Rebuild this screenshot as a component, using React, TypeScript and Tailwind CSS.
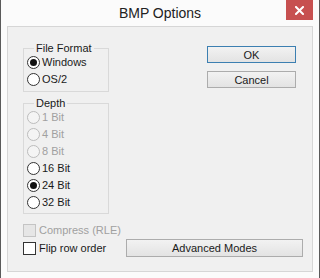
import React from "react";

function Radio({ label, checked = false, disabled = false }: { label: string; checked?: boolean; disabled?: boolean }) {
  return (
    <div className="flex h-[17px] items-center gap-[2px]">
      <span
        className={`flex h-[13px] w-[13px] items-center justify-center rounded-full border ${
          disabled ? "border-[#bcbcbc] bg-[#f4f4f4]" : "border-[#333333] bg-white"
        }`}
      >
        {checked && <span className="h-[7px] w-[7px] rounded-full bg-[#111111]" />}
      </span>
      <span className={disabled ? "text-[#a0a0a0]" : "text-[#1a1a1a]"}>{label}</span>
    </div>
  );
}

function Checkbox({ label, disabled = false }: { label: string; disabled?: boolean }) {
  return (
    <div className="flex h-[17px] items-center gap-[3px]">
      <span
        className={`h-[13px] w-[13px] border ${
          disabled ? "border-[#c4c4c4] bg-[#e6e6e6]" : "border-[#333333] bg-white"
        }`}
      />
      <span className={disabled ? "text-[#a0a0a0]" : "text-[#1a1a1a]"}>{label}</span>
    </div>
  );
}

function Group({ title, children }: { title: string; children: React.ReactNode }) {
  return (
    <div className="flex w-[86px] flex-col border border-[#d9d9d9] pl-[3px]">
      <span className="-mt-[7px] ml-[7px] h-[12px] w-fit bg-[#f0f0f0] px-[2px] leading-[12px] text-[#1a1a1a]">
        {title}
      </span>
      {children}
    </div>
  );
}

export default function App() {
  return (
    <div
      className="flex h-[278px] w-[320px] flex-col border-x border-[#5a5a5a] bg-[#fbfbfb] text-[11px]"
      style={{ fontFamily: '"Liberation Sans", Arial, sans-serif' }}
    >
      {/* title bar */}
      <div className="relative flex h-[26px] items-center justify-center">
        <span className="text-[14px] text-[#222222]">BMP Options</span>
        <div className="absolute right-[6px] top-0 flex h-[20px] w-[27px] items-center justify-center bg-[#c75050]">
          <svg width="9" height="9" viewBox="0 0 9 9">
            <path d="M1 1L8 8M8 1L1 8" stroke="white" strokeWidth="2" strokeLinecap="square" />
          </svg>
        </div>
      </div>

      {/* client area */}
      <div className="mx-[6px] flex h-[246px] flex-col border border-[#d6d6d6] bg-[#f0f0f0]">
        <div className="flex">
          <div className="ml-[15px] flex flex-col">
            <div className="mt-[21px]">
              <Group title="File Format">
                <div className="pb-[3px]">
                  <Radio label="Windows" checked />
                  <Radio label="OS/2" />
                </div>
              </Group>
            </div>
            <div className="mt-[11px]">
              <Group title="Depth">
                <div className="pb-[2px]">
                  <Radio label="1 Bit" disabled />
                  <Radio label="4 Bit" disabled />
                  <Radio label="8 Bit" disabled />
                  <Radio label="16 Bit" />
                  <Radio label="24 Bit" checked />
                  <Radio label="32 Bit" />
                </div>
              </Group>
            </div>
          </div>
          <div className="ml-auto mr-[16px] mt-[19px] flex w-[89px] flex-col gap-[8px]">
            <button className="h-[17px] border border-[#3c7fb1] bg-gradient-to-b from-[#f2f2f2] to-[#e3e3e3] text-[#1a1a1a]">
              OK
            </button>
            <button className="h-[17px] border border-[#acacac] bg-gradient-to-b from-[#f2f2f2] to-[#e3e3e3] text-[#1a1a1a]">
              Cancel
            </button>
          </div>
        </div>

        <div className="ml-[15px] mt-[8px] flex flex-col pr-[9px]">
          <Checkbox label="Compress (RLE)" disabled />
          <div className="flex items-center">
            <Checkbox label="Flip row order" />
            <button className="ml-auto h-[18px] w-[177px] border border-[#acacac] bg-gradient-to-b from-[#f2f2f2] to-[#e3e3e3] text-[#1a1a1a]">
              Advanced Modes
            </button>
          </div>
        </div>
      </div>
    </div>
  );
}
